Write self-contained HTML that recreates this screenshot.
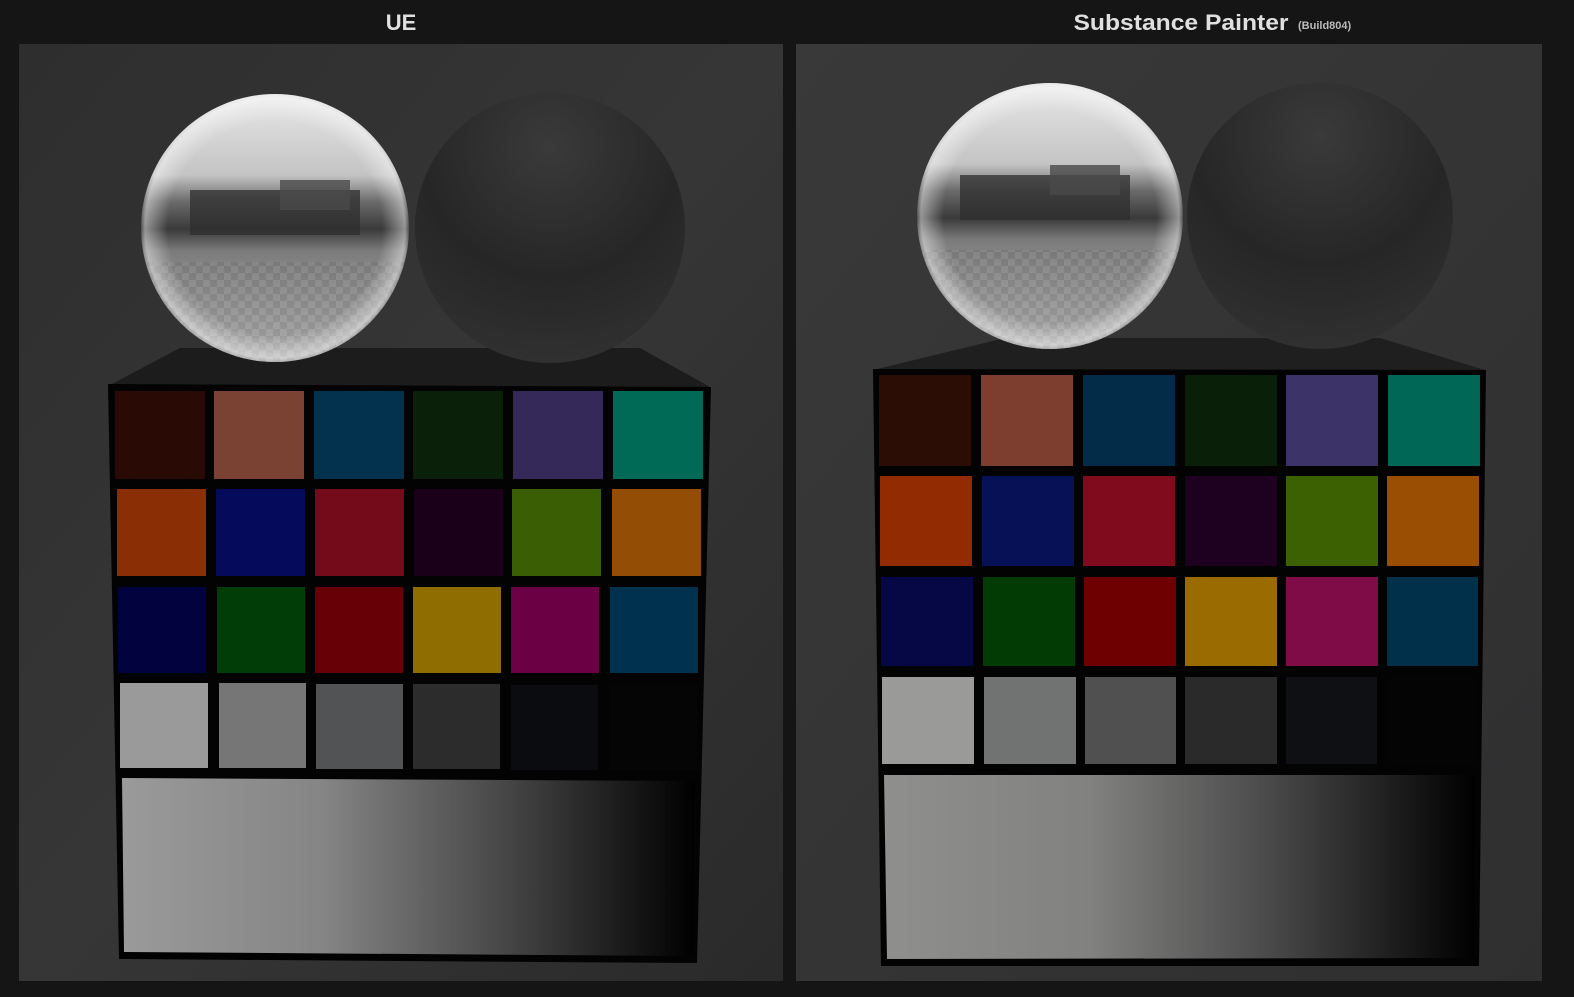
<!DOCTYPE html>
<html><head><meta charset="utf-8"><style>
html,body{margin:0;padding:0;background:#151515;width:1574px;height:997px;overflow:hidden}
svg{display:block}
text{font-family:"Liberation Sans",sans-serif;font-weight:bold;fill:#e0e0e0}
</style></head><body>
<svg width="1574" height="997" viewBox="0 0 1574 997">
<defs>
<linearGradient id="bgL" x1="0" y1="0" x2="1" y2="1"><stop offset="0" stop-color="#2e2e2e"/><stop offset="0.5" stop-color="#363636"/><stop offset="1" stop-color="#2a2a2a"/></linearGradient>
<linearGradient id="bgR" x1="0" y1="0" x2="1" y2="1"><stop offset="0" stop-color="#393939"/><stop offset="1" stop-color="#2f2f30"/></linearGradient>
<linearGradient id="chromeV" x1="0" y1="0" x2="0" y2="1">
<stop offset="0" stop-color="#e8e8e8"/><stop offset="0.3" stop-color="#c4c4c4"/><stop offset="0.4" stop-color="#6a6a6a"/><stop offset="0.5" stop-color="#3a3a3a"/><stop offset="0.58" stop-color="#7a7a7a"/><stop offset="0.75" stop-color="#9a9a9a"/><stop offset="1" stop-color="#cfcfcf"/></linearGradient>
<radialGradient id="rim" cx="0.5" cy="0.5" r="0.5"><stop offset="0.8" stop-color="#fff" stop-opacity="0"/><stop offset="0.97" stop-color="#fff" stop-opacity="0.45"/><stop offset="1" stop-color="#fff" stop-opacity="0.1"/></radialGradient>
<radialGradient id="dark" cx="0.5" cy="0.2" r="0.8"><stop offset="0" stop-color="#3a3a3a"/><stop offset="0.6" stop-color="#262626"/><stop offset="1" stop-color="#303030"/></radialGradient>
<linearGradient id="ramp" x1="0" y1="0" x2="1" y2="0"><stop offset="0" stop-color="#9a9a9a"/><stop offset="0.35" stop-color="#858585"/><stop offset="0.65" stop-color="#4a4a4a"/><stop offset="1" stop-color="#000"/></linearGradient>
<linearGradient id="rampR" x1="0" y1="0" x2="1" y2="0"><stop offset="0" stop-color="#8f8f8d"/><stop offset="0.35" stop-color="#818180"/><stop offset="0.65" stop-color="#4a4a4a"/><stop offset="1" stop-color="#000"/></linearGradient>
<pattern id="chk" width="14" height="14" patternUnits="userSpaceOnUse"><rect width="14" height="14" fill="#8a8a8a"/><rect width="7" height="7" fill="#6e6e6e"/><rect x="7" y="7" width="7" height="7" fill="#6e6e6e"/></pattern>
<clipPath id="cL"><circle cx="275" cy="228" r="134"/></clipPath>
<clipPath id="cR"><circle cx="1050" cy="216" r="133"/></clipPath>
</defs>
<text x="401" y="30" font-size="22" text-anchor="middle">UE</text>
<text x="1181" y="30" font-size="22" text-anchor="middle" textLength="215" lengthAdjust="spacingAndGlyphs">Substance Painter</text>
<text x="1298" y="29" font-size="11" style="fill:#bbb">(Build804)</text>
<rect x="19" y="44" width="764" height="937" fill="url(#bgL)"/>
<rect x="796" y="44" width="746" height="937" fill="url(#bgR)"/>

<!-- LEFT -->
<polygon points="110,385 180,348 640,348 710,387" fill="#1c1c1c"/>
<polygon points="108,384 711,387 697,963 119,959" fill="#030303"/>
<g clip-path="url(#cL)">
<rect x="140" y="94" width="270" height="270" fill="url(#chromeV)"/>
<rect x="140" y="262" width="270" height="100" fill="url(#pchk)" opacity="0"/>
<rect x="190" y="190" width="170" height="45" fill="#2e2e2e" opacity="0.75"/>
<rect x="280" y="180" width="70" height="30" fill="#4a4a4a" opacity="0.8"/>
<rect x="140" y="262" width="270" height="100" fill="url(#chk)" opacity="0.45"/>
<circle cx="275" cy="228" r="134" fill="url(#rim)"/>
</g>
<circle cx="550" cy="228" r="135" fill="url(#dark)"/>
<g>
<rect x="115" y="391" width="90" height="88" fill="#2a0a05"/><rect x="214" y="391" width="90" height="88" fill="#7a4232"/><rect x="314" y="391" width="90" height="88" fill="#03324f"/><rect x="413" y="391" width="90" height="88" fill="#0a2008"/><rect x="513" y="391" width="90" height="88" fill="#35295a"/><rect x="613" y="391" width="90" height="88" fill="#006a56"/>
<rect x="117" y="489" width="89" height="87" fill="#8a2e05"/><rect x="216" y="489" width="89" height="87" fill="#050a5a"/><rect x="315" y="489" width="89" height="87" fill="#730b1b"/><rect x="414" y="489" width="89" height="87" fill="#1a0018"/><rect x="512" y="489" width="89" height="87" fill="#3a5e03"/><rect x="612" y="489" width="89" height="87" fill="#934d04"/>
<rect x="118" y="587" width="88" height="86" fill="#02023e"/><rect x="217" y="587" width="88" height="86" fill="#003d07"/><rect x="315" y="587" width="88" height="86" fill="#670006"/><rect x="413" y="587" width="88" height="86" fill="#8f6d00"/><rect x="511" y="587" width="88" height="86" fill="#6c0044"/><rect x="610" y="587" width="88" height="86" fill="#003250"/>
<rect x="120" y="683" width="88" height="85" fill="#9a9a9a"/><rect x="219" y="683" width="87" height="85" fill="#767676"/><rect x="316" y="684" width="87" height="85" fill="#525354"/><rect x="413" y="684" width="87" height="85" fill="#2c2c2c"/><rect x="511" y="685" width="87" height="85" fill="#0b0c0f"/><rect x="609" y="685" width="88" height="85" fill="#050505"/>
<polygon points="122,778 695,781 693,956 124,952" fill="url(#ramp)"/>
</g>

<!-- RIGHT -->
<polygon points="873,370 1005,338 1380,338 1485,370" fill="#1f1f1f"/>
<polygon points="873,369 1486,370 1479,966 881,966" fill="#030303"/>
<g clip-path="url(#cR)">
<rect x="915" y="83" width="270" height="270" fill="url(#chromeV)"/>
<rect x="960" y="175" width="170" height="45" fill="#2e2e2e" opacity="0.75"/>
<rect x="1050" y="165" width="70" height="30" fill="#4a4a4a" opacity="0.8"/>
<rect x="915" y="250" width="270" height="100" fill="url(#chk)" opacity="0.45"/>
<circle cx="1050" cy="216" r="133" fill="url(#rim)"/>
</g>
<circle cx="1320" cy="216" r="133" fill="url(#dark)"/>
<rect x="879" y="375" width="92" height="91" fill="#2c0d06"/><rect x="981" y="375" width="92" height="91" fill="#7d3e30"/><rect x="1083" y="375" width="92" height="91" fill="#032c48"/><rect x="1185" y="375" width="92" height="91" fill="#0a1f08"/><rect x="1286" y="375" width="92" height="91" fill="#3c3469"/><rect x="1388" y="375" width="92" height="91" fill="#006656"/>
<rect x="880" y="476" width="92" height="90" fill="#922a02"/><rect x="982" y="476" width="92" height="90" fill="#071256"/><rect x="1083" y="476" width="92" height="90" fill="#7f0b1c"/><rect x="1185" y="476" width="92" height="90" fill="#1e0020"/><rect x="1286" y="476" width="92" height="90" fill="#3b6103"/><rect x="1387" y="476" width="92" height="90" fill="#9a4e03"/>
<rect x="881" y="577" width="92" height="89" fill="#060845"/><rect x="983" y="577" width="92" height="89" fill="#023c04"/><rect x="1084" y="577" width="92" height="89" fill="#6e0002"/><rect x="1185" y="577" width="92" height="89" fill="#9a6c00"/><rect x="1286" y="577" width="92" height="89" fill="#7f0b47"/><rect x="1387" y="577" width="91" height="89" fill="#00304a"/>
<rect x="882" y="677" width="92" height="87" fill="#9a9a98"/><rect x="984" y="677" width="92" height="87" fill="#717272"/><rect x="1085" y="677" width="91" height="87" fill="#505051"/><rect x="1185" y="677" width="92" height="87" fill="#2a2a2a"/><rect x="1286" y="677" width="91" height="87" fill="#0f1014"/><rect x="1387" y="677" width="90" height="87" fill="#040404"/>
<polygon points="884,775 1475,775 1474,958 887,959" fill="url(#rampR)"/>
</svg>
</body></html>
